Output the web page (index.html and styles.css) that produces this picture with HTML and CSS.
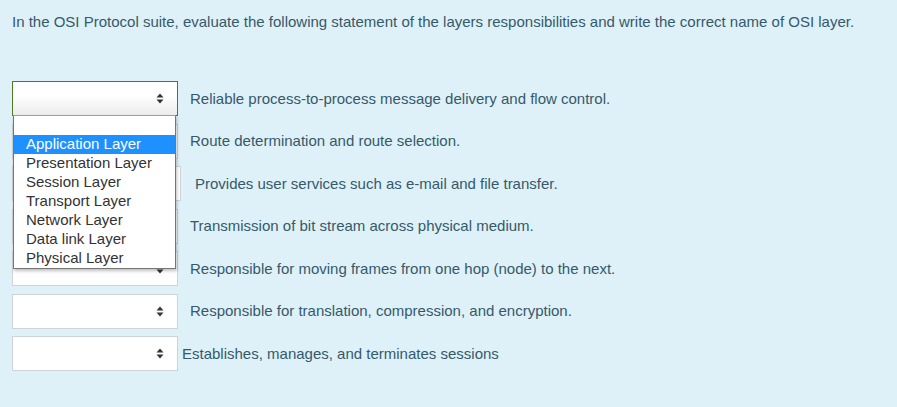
FILE: index.html
```html
<!DOCTYPE html>
<html>
<head>
<meta charset="utf-8">
<link rel="stylesheet" href="styles.css">
</head>
<body>
<div class="page">
  <p class="intro">In the OSI Protocol suite, evaluate the following statement of the layers responsibilities and write the correct name of OSI layer.</p>
  <div class="rows">
    <div class="row">
      <div class="select-wrap">
        <div class="select focused">
          <svg class="arrows" width="8" height="11" viewBox="0 0 8 11"><path d="M4 0.5L7.5 4.5H0.5Z M4 10.5L7.5 6.5H0.5Z" fill="#333"/></svg>
        </div>
        <ul class="dropdown">
          <li class="opt">&nbsp;</li>
          <li class="opt active">Application Layer</li>
          <li class="opt">Presentation Layer</li>
          <li class="opt">Session Layer</li>
          <li class="opt">Transport Layer</li>
          <li class="opt">Network Layer</li>
          <li class="opt">Data link Layer</li>
          <li class="opt">Physical Layer</li>
        </ul>
      </div>
      <span class="label">Reliable process-to-process message delivery and flow control.</span>
    </div>
    <div class="row">
      <div class="select"><svg class="arrows" width="8" height="11" viewBox="0 0 8 11"><path d="M4 0.5L7.5 4.5H0.5Z M4 10.5L7.5 6.5H0.5Z" fill="#333"/></svg></div>
      <span class="label">Route determination and route selection.</span>
    </div>
    <div class="row">
      <div class="select wide"><svg class="arrows" width="8" height="11" viewBox="0 0 8 11"><path d="M4 0.5L7.5 4.5H0.5Z M4 10.5L7.5 6.5H0.5Z" fill="#333"/></svg></div>
      <span class="label">Provides user services such as e-mail and file transfer.</span>
    </div>
    <div class="row">
      <div class="select"><svg class="arrows" width="8" height="11" viewBox="0 0 8 11"><path d="M4 0.5L7.5 4.5H0.5Z M4 10.5L7.5 6.5H0.5Z" fill="#333"/></svg></div>
      <span class="label">Transmission of bit stream across physical medium.</span>
    </div>
    <div class="row">
      <div class="select"><svg class="arrows" width="8" height="11" viewBox="0 0 8 11"><path d="M4 0.5L7.5 4.5H0.5Z M4 10.5L7.5 6.5H0.5Z" fill="#333"/></svg></div>
      <span class="label">Responsible for moving frames from one hop (node) to the next.</span>
    </div>
    <div class="row">
      <div class="select"><svg class="arrows" width="8" height="11" viewBox="0 0 8 11"><path d="M4 0.5L7.5 4.5H0.5Z M4 10.5L7.5 6.5H0.5Z" fill="#333"/></svg></div>
      <span class="label">Responsible for translation, compression, and encryption.</span>
    </div>
    <div class="row">
      <div class="select"><svg class="arrows" width="8" height="11" viewBox="0 0 8 11"><path d="M4 0.5L7.5 4.5H0.5Z M4 10.5L7.5 6.5H0.5Z" fill="#333"/></svg></div>
      <span class="label tight">Establishes, manages, and terminates sessions</span>
    </div>
  </div>
</div>
</body>
</html>
```
FILE: styles.css
```css
html, body {
  margin: 0;
  padding: 0;
  background: #def1f8;
}
.page {
  width: 897px;
  height: 407px;
  padding: 12px 12px 0 12px;
  box-sizing: border-box;
  font-family: "Liberation Sans", Arial, sans-serif;
  color: #36596a;
}
.intro {
  margin: 0;
  font-size: 15px;
  line-height: 20px;
}
.rows {
  margin-top: 49px;
  display: flex;
  flex-direction: column;
  gap: 7.5px;
}
.row {
  display: flex;
  align-items: center;
  height: 35px;
}
.select-wrap {
  position: relative;
}
.select {
  width: 166px;
  height: 35px;
  box-sizing: border-box;
  border: 1px solid #cdd3d8;
  background: #fff;
  display: flex;
  align-items: center;
  justify-content: flex-end;
  padding-right: 13px;
}
.select.wide {
  width: 169px;
}
.select.focused {
  border-color: #4f7a1f;
  background: linear-gradient(#ffffff 40%, #ececec);
}
.arrows {
  display: block;
}
.label {
  margin-left: 12px;
  font-size: 15px;
  line-height: 18px;
}
.select.wide + .label {
  margin-left: 14px;
}
.label.tight {
  margin-left: 4px;
}
.dropdown {
  position: absolute;
  left: 1px;
  top: 34px;
  width: 163px;
  margin: 0;
  padding: 0;
  list-style: none;
  background: #fff;
  border: 1px solid #767676;
  border-top: 1px solid #a0a0a0;
  box-sizing: border-box;
  box-shadow: 1px 2px 3px rgba(0, 0, 0, 0.25);
  z-index: 5;
  font-family: "Liberation Sans", Arial, sans-serif;
  font-size: 15px;
  color: #333;
}
.opt {
  height: 19px;
  line-height: 18px;
  padding-left: 12px;
  white-space: nowrap;
}
.opt.active {
  background: #1e90ff;
  color: #fff;
}
```
